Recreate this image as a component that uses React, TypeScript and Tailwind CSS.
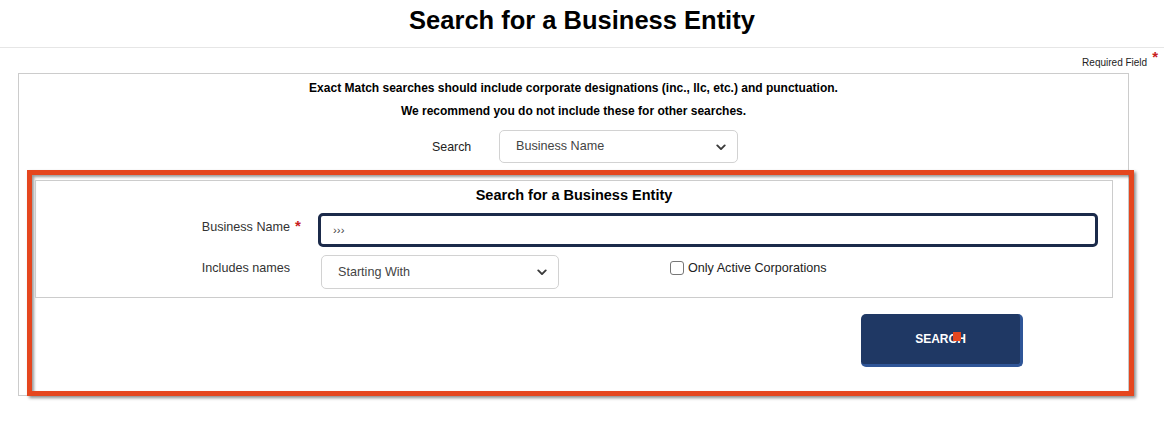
import React from "react";

function Chevron({ className }: { className?: string }) {
  return (
    <svg className={className} width="10" height="7" viewBox="0 0 10 7" fill="none">
      <path d="M1.3 1.4 L5 5.1 L8.7 1.4" stroke="#3a3a3a" strokeWidth="1.9" strokeLinecap="round" strokeLinejoin="round" />
    </svg>
  );
}

function FakeSelect({ value, className }: { value: string; className: string }) {
  return (
    <div className={`relative shrink-0 ${className}`}>
      <select
        defaultValue={value}
        className="h-full w-full appearance-none rounded-[5px] border border-[#d2d2d2] bg-white pl-[16px] text-[12.6px] text-[#444] outline-none"
      >
        <option>{value}</option>
      </select>
      <Chevron className="pointer-events-none absolute right-[12px] top-[14px]" />
    </div>
  );
}

export default function App() {
  return (
    <div className="h-[424px] w-[1164px] overflow-hidden bg-white font-['Liberation_Sans',Arial,sans-serif] text-[#333]">
      {/* Page title */}
      <div className="h-[48px] border-b border-[#e6e6e6] pt-[6px]">
        <h1 className="text-center text-[25.5px] font-bold leading-[29px] text-black">
          Search for a Business Entity
        </h1>
      </div>

      {/* Required field note */}
      <div className="flex h-[25px] items-start justify-end pr-[6px]">
        <span className="mt-[9px] text-[10px] leading-[12px] text-[#222]">Required Field</span>
        <span className="ml-[5px] mt-[1px] text-[15px] font-bold leading-[15px] text-[#c8201e]">*</span>
      </div>

      {/* Outer search panel */}
      <div className="ml-[18px] h-[323px] w-[1111px] border border-[#cccccc]">
        <p className="mt-[6px] text-center text-[12px] font-bold leading-[16px] text-black">
          Exact Match searches should include corporate designations (inc., llc, etc.) and punctuation.
        </p>
        <p className="mt-[7px] text-center text-[12px] font-bold leading-[16px] text-black">
          We recommend you do not include these for other searches.
        </p>

        <div className="mt-[11px] flex h-[33px] items-center pl-[413px]">
          <span className="w-[67px] shrink-0 text-[12.4px] leading-[16px] text-[#222]">Search</span>
          <FakeSelect value="Business Name" className="h-[33px] w-[239px]" />
        </div>

        {/* Highlighted area */}
        <div className="relative mt-[7px] ml-[8px] h-[226px] w-[1107px] border-[5px] border-[#e5461e] shadow-[2px_2px_3px_rgba(0,0,0,0.45),inset_2px_2px_3px_rgba(0,0,0,0.4)]">
          <div className="ml-[3px] mt-[5px] h-[118px] w-[1078px] border border-[#cccccc]">
            <h2 className="pt-[5px] text-center text-[14.5px] font-bold leading-[18px] text-black">
              Search for a Business Entity
            </h2>

            <div className="mt-[9px] flex items-start">
              <label className="w-[254px] shrink-0 pt-[6px] text-right text-[12.6px] leading-[16px] text-[#333]">
                Business Name
              </label>
              <span className="w-[14px] shrink-0 pl-[5px] pt-[5px] text-[15px] font-bold leading-[15px] text-[#c8201e]">*</span>
              <div className="ml-[14px] flex h-[34px] w-[780px] shrink-0 items-center rounded-[5px] border-[3px] border-[#1b2a4a] bg-white pl-[12px]">
                <span className="text-[11.5px] leading-[12px] text-[#444]">›››</span>
              </div>
            </div>

            <div className="mt-[8px] flex items-start">
              <label className="w-[254px] shrink-0 pt-[5px] text-right text-[12.6px] leading-[16px] text-[#333]">
                Includes names
              </label>
              <span className="w-[14px] shrink-0" />
              <FakeSelect value="Starting With" className="ml-[17px] h-[34px] w-[238px]" />
              <label className="ml-[111px] flex items-center pt-[5px]">
                <input
                  type="checkbox"
                  className="h-[14px] w-[14px] appearance-none rounded-[3px] border border-[#777] bg-white"
                />
                <span className="ml-[4px] text-[12.6px] leading-[16px] text-[#222]">Only Active Corporations</span>
              </label>
            </div>
          </div>

          <div className="mt-[16px] flex">
            <button className="relative ml-[829px] h-[53px] w-[162px] rounded-[5px] border-b-[3px] border-r-[3px] border-[#2f5597] bg-[#1f3864] text-[12px] font-bold text-white">
              SEARCH
              <span className="absolute left-[92px] top-[18px] h-[9px] w-[8px] bg-[#e5461e]" />
            </button>
          </div>
        </div>
      </div>
    </div>
  );
}
